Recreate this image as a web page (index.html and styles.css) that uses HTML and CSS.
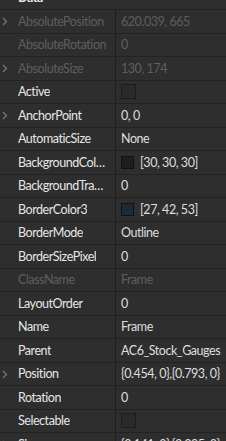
FILE: index.html
```html
<!DOCTYPE html>
<html lang="en">
<head>
    <meta charset="UTF-8">
    <title>Properties</title>
    <link rel="stylesheet" href="styles.css">
</head>
<body>
    <div class="props">
        <div class="section-head">Data</div>

        <div class="row locked">
            <div class="name"><svg class="arrow" viewBox="0 0 6 9"><polyline points="1,1 4.5,4.5 1,8"/></svg><span class="label">AbsolutePosition</span></div>
            <div class="value">620.039, 665</div>
        </div>
        <div class="row locked">
            <div class="name"><span class="label">AbsoluteRotation</span></div>
            <div class="value">0</div>
        </div>
        <div class="row locked">
            <div class="name"><svg class="arrow" viewBox="0 0 6 9"><polyline points="1,1 4.5,4.5 1,8"/></svg><span class="label">AbsoluteSize</span></div>
            <div class="value">130, 174</div>
        </div>
        <div class="row">
            <div class="name"><span class="label">Active</span></div>
            <div class="value"><span class="check"></span></div>
        </div>
        <div class="row">
            <div class="name"><svg class="arrow" viewBox="0 0 6 9"><polyline points="1,1 4.5,4.5 1,8"/></svg><span class="label">AnchorPoint</span></div>
            <div class="value">0, 0</div>
        </div>
        <div class="row">
            <div class="name"><span class="label">AutomaticSize</span></div>
            <div class="value">None</div>
        </div>
        <div class="row">
            <div class="name"><span class="label">BackgroundColor3</span></div>
            <div class="value"><span class="swatch" style="background: rgb(30, 30, 30)"></span>[30, 30, 30]</div>
        </div>
        <div class="row">
            <div class="name"><span class="label">BackgroundTransparency</span></div>
            <div class="value">0</div>
        </div>
        <div class="row">
            <div class="name"><span class="label">BorderColor3</span></div>
            <div class="value"><span class="swatch" style="background: rgb(27, 42, 53)"></span>[27, 42, 53]</div>
        </div>
        <div class="row">
            <div class="name"><span class="label">BorderMode</span></div>
            <div class="value">Outline</div>
        </div>
        <div class="row">
            <div class="name"><span class="label">BorderSizePixel</span></div>
            <div class="value">0</div>
        </div>
        <div class="row locked">
            <div class="name"><span class="label">ClassName</span></div>
            <div class="value">Frame</div>
        </div>
        <div class="row">
            <div class="name"><span class="label">LayoutOrder</span></div>
            <div class="value">0</div>
        </div>
        <div class="row">
            <div class="name"><span class="label">Name</span></div>
            <div class="value">Frame</div>
        </div>
        <div class="row">
            <div class="name"><span class="label">Parent</span></div>
            <div class="value">AC6_Stock_Gauges</div>
        </div>
        <div class="row">
            <div class="name"><svg class="arrow" viewBox="0 0 6 9"><polyline points="1,1 4.5,4.5 1,8"/></svg><span class="label">Position</span></div>
            <div class="value">{0.454, 0},{0.793, 0}</div>
        </div>
        <div class="row">
            <div class="name"><span class="label">Rotation</span></div>
            <div class="value">0</div>
        </div>
        <div class="row">
            <div class="name"><span class="label">Selectable</span></div>
            <div class="value"><span class="check"></span></div>
        </div>
        <div class="row">
            <div class="name"><svg class="arrow" viewBox="0 0 6 9"><polyline points="1,1 4.5,4.5 1,8"/></svg><span class="label">Size</span></div>
            <div class="value">{0.141, 0},{0.395, 0}</div>
        </div>
    </div>
</body>
</html>
```

FILE: styles.css
```css
html, body {
    margin: 0;
    height: 100%;
    overflow: hidden;
    background: #2e2e2e;
}
body {
    font-family: Lato, "Open Sans", sans-serif;
    font-size: 12.5px;
    letter-spacing: -0.45px;
    color: #e6e6e6;
}
.props {
    margin-top: -14px;
}
.section-head {
    height: 23px;
    line-height: 23px;
    padding-left: 18px;
    font-weight: bold;
    border-bottom: 1px solid #222;
}
.row {
    display: grid;
    grid-template-columns: 116px 1fr;
    height: 22.5px;
    border-bottom: 1px solid #222;
}
.name {
    display: flex;
    align-items: center;
    border-right: 1px solid #1e1e1e;
    min-width: 0;
    position: relative;
}
.label {
    margin-left: 18px;
    margin-right: 8px;
    white-space: nowrap;
    overflow: hidden;
    text-overflow: ellipsis;
}
.arrow {
    position: absolute;
    left: 2px;
    top: 7px;
    width: 6px;
    height: 9px;
    fill: none;
    stroke: #7a7a7a;
    stroke-width: 1.2;
}
.value {
    display: flex;
    align-items: center;
    padding-left: 5px;
    white-space: nowrap;
    overflow: hidden;
    color: #dedede;
}
.locked .label,
.locked .value {
    color: #5e5e5e;
}
.check {
    width: 13px;
    height: 13px;
    background: #2a2a2a;
    border: 1px solid #1b1b1b;
}
.swatch {
    width: 11px;
    height: 11px;
    border: 1px solid #111;
    margin-right: 6px;
}
```
